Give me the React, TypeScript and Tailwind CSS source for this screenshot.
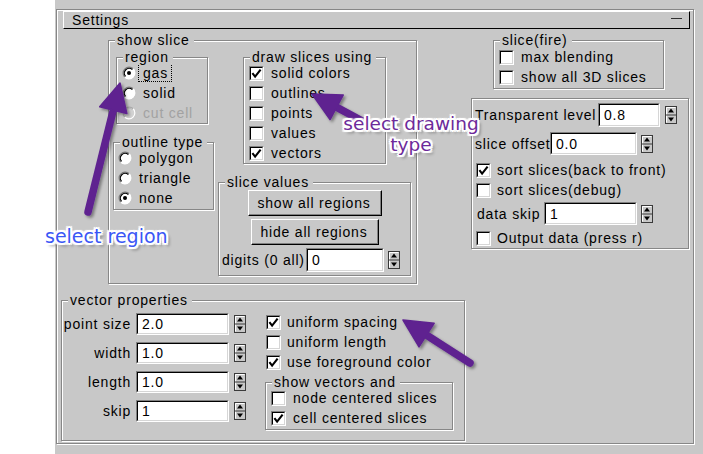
import React from "react";

const panelCls =
  "relative shrink-0 border border-[#878787] shadow-[inset_1px_1px_0_#ffffff,1px_1px_0_#ffffff]";

function Panel(props: { label?: string; className?: string; children?: React.ReactNode }) {
  return (
    <div className={panelCls + " " + (props.className ?? "")}>
      {props.label ? (
        <span className="absolute left-[6px] top-[-9px] whitespace-nowrap bg-[#c8c8c8] pl-[2px] pr-[4px] leading-[16px]">
          {props.label}
        </span>
      ) : null}
      {props.children}
    </div>
  );
}

function CheckBox({ checked }: { checked?: boolean }) {
  return (
    <span className="flex h-[15px] w-[15px] shrink-0 border border-t-[#808080] border-l-[#808080] border-b-white border-r-white">
      <span className="flex flex-1 items-center justify-center border border-t-black border-l-black border-b-[#d6d6d6] border-r-[#d6d6d6] bg-white">
        {checked ? (
          <svg width="11" height="11" viewBox="0 0 11 11">
            <path d="M1.4 5.2 L4.1 8.6 L9.6 1.6" fill="none" stroke="#000" strokeWidth="2.1" />
          </svg>
        ) : null}
      </span>
    </span>
  );
}

function CheckRow({ label, checked, wide, className = "" }: { label: string; checked?: boolean; wide?: boolean; className?: string }) {
  return (
    <div className={"flex h-[20px] shrink-0 items-center " + (wide ? "gap-[7px] " : "gap-[6px] ") + className}>
      <CheckBox checked={checked} />
      <span className="whitespace-nowrap">{label}</span>
    </div>
  );
}

function Radio({ on, disabled }: { on?: boolean; disabled?: boolean }) {
  return (
    <svg width="14" height="14" viewBox="0 0 14 14" className="shrink-0">
      <circle cx="7" cy="7" r="6" fill={disabled ? "#d2d2d2" : "#ffffff"} />
      <path d="M2.76 11.24A6 6 0 0 1 11.24 2.76" fill="none" stroke={disabled ? "#a9a9a9" : "#7a7a7a"} strokeWidth="1.2" />
      <path d="M3.61 10.39A4.8 4.8 0 0 1 10.39 3.61" fill="none" stroke={disabled ? "#bdbdbd" : "#000000"} strokeWidth="1.2" />
      <path d="M11.24 2.76A6 6 0 0 1 2.76 11.24" fill="none" stroke="#ffffff" strokeWidth="1.2" />
      {on ? <circle cx="7" cy="7" r="2" fill="#000" /> : null}
    </svg>
  );
}

function RadioRow({ label, on, focus, disabled }: { label: string; on?: boolean; focus?: boolean; disabled?: boolean }) {
  return (
    <div className="flex h-[20px] shrink-0 items-center">
      <Radio on={on} disabled={disabled} />
      <span
        className={
          "ml-[2px] flex h-[18px] items-center whitespace-nowrap border border-dotted pl-[4px] pr-[3px] " +
          (focus ? "border-black" : "border-transparent") +
          (disabled ? " text-[#a2a2a2]" : "")
        }
      >
        {label}
      </span>
    </div>
  );
}

function Spinner({ className = "" }: { className?: string }) {
  return (
    <svg width="12" height="18" viewBox="0 0 12 18" className={"shrink-0 " + className}>
      <rect x="0" y="0" width="12" height="18" fill="#c8c8c8" />
      <rect x="0.5" y="0.5" width="11" height="17" fill="none" stroke="#3a3a3a" />
      <path d="M1.5 16.5V1.5H10.5" fill="none" stroke="#ffffff" />
      <path d="M1 9H11" stroke="#3a3a3a" />
      <path d="M6 2.6L9 6.6H3Z" fill="#000" />
      <path d="M3 11.4H9L6 15.4Z" fill="#000" />
    </svg>
  );
}

function Field({ value, className = "" }: { value: string; className?: string }) {
  return (
    <div className={"flex shrink-0 border border-t-[#808080] border-l-[#808080] border-b-white border-r-white " + className}>
      <div className="flex flex-1 items-center border border-t-black border-l-black border-b-[#d6d6d6] border-r-[#d6d6d6] bg-white pl-[4px]">
        {value}
      </div>
    </div>
  );
}

function Btn({ children, className = "" }: { children: React.ReactNode; className?: string }) {
  return (
    <div className={"flex shrink-0 border border-t-white border-l-white border-b-black border-r-black " + className}>
      <div className="flex flex-1 items-center justify-center border-b border-r border-b-[#808080] border-r-[#808080] whitespace-nowrap">
        {children}
      </div>
    </div>
  );
}

function arrow(tx: number, ty: number, px: number, py: number, hl = 28, hw = 14) {
  const dx = px - tx;
  const dy = py - ty;
  const L = Math.hypot(dx, dy);
  const ux = dx / L;
  const uy = dy / L;
  const nx = -uy;
  const ny = ux;
  const bx = px - ux * hl;
  const by = py - uy * hl;
  return {
    shaft: `M${tx} ${ty} L${bx + ux * 3} ${by + uy * 3}`,
    head: `M${px} ${py} L${bx + nx * hw} ${by + ny * hw} L${bx - nx * hw} ${by - ny * hw} Z`,
  };
}

const ARROWS = [arrow(88, 212, 120, 83), arrow(366, 123, 312, 94), arrow(470, 363, 403, 320)];

const outline =
  "[text-shadow:0_0_1px_#fff,1px_0_0_#fff,-1px_0_0_#fff,0_1px_0_#fff,0_-1px_0_#fff,1px_1px_0_#fff,-1px_-1px_0_#fff,1px_-1px_0_#fff,-1px_1px_0_#fff,2px_0_0_#fff,-2px_0_0_#fff,0_2px_0_#fff,0_-2px_0_#fff,2px_2px_1px_#fff,-2px_-2px_1px_#fff,2px_-2px_1px_#fff,-2px_2px_1px_#fff,3px_3px_3px_rgba(0,0,0,0.45)]";

export default function App() {
  return (
    <div className="relative flex h-[454px] w-[703px] overflow-hidden bg-white font-['Liberation_Sans',Arial,sans-serif] text-[14px] leading-[16px] tracking-[0.8px] text-black">
      <div className="h-[454px] w-[55px] shrink-0 bg-white" />
      <div className="h-[454px] w-[648px] shrink-0 bg-[#c8c8c8] pl-[1px] pt-[9px]">
        {/* outer rollout frame */}
        <div className="flex h-[435px] w-[638px] flex-col border border-[#878787] shadow-[inset_1px_1px_0_#ffffff,1px_1px_0_#ffffff]">
          {/* title bar */}
          <div className="ml-[6px] mt-[1px] flex h-[18px] w-[627px] shrink-0 items-center justify-between border border-t-white border-l-white border-b-black border-r-black pl-[8px] pr-[7px]">
            <span>Settings</span>
            <span className="mb-[3px] h-[1px] w-[11px] bg-[#303030]" />
          </div>

          {/* row 1 */}
          <div className="mt-[11px] flex shrink-0">
            <Panel label="show slice" className="ml-[51px] h-[244px] w-[309px]">
              <div className="flex">
                {/* column 1 */}
                <div className="ml-[4px] flex w-[101px] shrink-0 flex-col">
                  <Panel label="region" className="ml-[3px] mt-[16px] h-[67px] w-[92px]">
                    <div className="flex flex-col pl-[5px] pt-[5px]">
                      <RadioRow label="gas" on focus />
                      <RadioRow label="solid" />
                      <RadioRow label="cut cell" disabled />
                    </div>
                  </Panel>
                  <Panel label="outline type" className="mt-[18px] h-[68px] w-[101px]">
                    <div className="flex flex-col pl-[4px] pt-[5px]">
                      <RadioRow label="polygon" />
                      <RadioRow label="triangle" />
                      <RadioRow label="none" on />
                    </div>
                  </Panel>
                </div>
                {/* column 2 */}
                <div className="ml-[4px] flex w-[193px] shrink-0 flex-col items-center">
                  <Panel label="draw slices using" className="mt-[16px] h-[107px] w-[143px]">
                    <div className="flex flex-col pl-[5px] pt-[5px]">
                      <CheckRow label="solid colors" checked wide />
                      <CheckRow label="outlines" wide />
                      <CheckRow label="points" wide />
                      <CheckRow label="values" wide />
                      <CheckRow label="vectors" checked wide />
                    </div>
                  </Panel>
                  <Panel label="slice values" className="mt-[18px] h-[94px] w-[193px]">
                    <div className="flex flex-col items-center pt-[7px]">
                      <Btn className="h-[26px] w-[134px]">show all regions</Btn>
                      <Btn className="mt-[3px] h-[26px] w-[128px]">hide all regions</Btn>
                      <div className="mt-[3px] flex h-[24px] items-center self-stretch pl-[3px]">
                        <span className="w-[84px] shrink-0 whitespace-nowrap">digits (0 all)</span>
                        <Field value="0" className="h-[24px] w-[78px]" />
                        <Spinner className="ml-[4px]" />
                      </div>
                    </div>
                  </Panel>
                </div>
              </div>
            </Panel>

            {/* right column */}
            <div className="ml-[54px] flex w-[218px] shrink-0 flex-col">
              <Panel label="slice(fire)" className="ml-[22px] h-[49px] w-[171px]">
                <div className="flex flex-col pl-[5px] pt-[6px]">
                  <CheckRow label="max blending" wide />
                  <CheckRow label="show all 3D slices" wide />
                </div>
              </Panel>
              <Panel className="mt-[9px] h-[151px] w-[218px]">
                <div className="flex flex-col">
                  <div className="mt-[4px] flex h-[24px] items-center pl-[3px]">
                    <span className="w-[123px] shrink-0 whitespace-nowrap">Transparent level</span>
                    <Field value="0.8" className="h-[24px] w-[62px]" />
                    <Spinner className="ml-[5px]" />
                  </div>
                  <div className="mt-[5px] flex h-[23px] items-center pl-[3px]">
                    <span className="w-[75px] shrink-0 whitespace-nowrap">slice offset</span>
                    <Field value="0.0" className="h-[23px] w-[87px]" />
                    <Spinner className="ml-[4px]" />
                  </div>
                  <CheckRow label="sort slices(back to front)" checked className="ml-[4px] mt-[5px]" />
                  <CheckRow label="sort slices(debug)" className="ml-[4px]" />
                  <div className="mt-[2px] flex h-[23px] items-center pl-[5px]">
                    <span className="w-[67px] shrink-0 whitespace-nowrap">data skip</span>
                    <Field value="1" className="h-[23px] w-[93px]" />
                    <Spinner className="ml-[4px]" />
                  </div>
                  <CheckRow label="Output data (press r)" className="ml-[4px] mt-[3px]" />
                </div>
              </Panel>
            </div>
          </div>

          {/* row 2: vector properties */}
          <Panel label="vector properties" className="ml-[4px] mt-[16px] h-[141px] w-[404px]">
            <div className="flex">
              <div className="flex w-[184px] shrink-0 flex-col pt-[12px]">
                {[
                  ["point size", "2.0"],
                  ["width", "1.0"],
                  ["length", "1.0"],
                  ["skip", "1"],
                ].map(([l, v], i) => (
                  <div key={l} className={"flex h-[22px] items-center " + (i > 0 ? "mt-[7px]" : "")}>
                    <span className="w-[69px] shrink-0 whitespace-nowrap text-right">{l}</span>
                    <Field value={v} className="ml-[5px] h-[22px] w-[93px]" />
                    <Spinner className="ml-[5px]" />
                  </div>
                ))}
              </div>
              <div className="ml-[19px] flex flex-col pt-[11px]">
                <CheckRow label="uniform spacing" checked className="ml-[1px]" />
                <CheckRow label="uniform length" className="ml-[1px]" />
                <CheckRow label="use foreground color" checked className="ml-[1px]" />
                <Panel label="show vectors and" className="mt-[10px] h-[48px] w-[188px]">
                  <div className="flex flex-col pl-[5px] pt-[5px]">
                    <CheckRow label="node centered slices" wide />
                    <CheckRow label="cell centered slices" checked wide />
                  </div>
                </Panel>
              </div>
            </div>
          </Panel>
        </div>
      </div>

      {/* annotation arrows */}
      <svg className="pointer-events-none absolute left-0 top-0" width="703" height="454" viewBox="0 0 703 454">
        <defs>
          <filter id="ash" x="-30%" y="-30%" width="160%" height="160%">
            <feDropShadow dx="2" dy="2" stdDeviation="1.6" floodColor="#000" floodOpacity="0.4" />
          </filter>
        </defs>
        {ARROWS.map((a, i) => (
          <g key={i} filter="url(#ash)">
            <path d={a.shaft} stroke="#5e2490" strokeWidth="7.5" strokeLinecap="round" fill="none" />
            <path d={a.head} fill="#5e2490" stroke="#5e2490" strokeWidth="1.5" strokeLinejoin="round" />
          </g>
        ))}
      </svg>

      <div
        className={
          "pointer-events-none absolute left-[45px] top-[225px] whitespace-nowrap font-['DejaVu_Sans',sans-serif] text-[19px] leading-[22px] tracking-normal text-[#3a56f5] " +
          outline
        }
      >
        select region
      </div>
      <div
        className={
          "pointer-events-none absolute left-[340px] top-[113px] w-[142px] text-center font-['DejaVu_Sans',sans-serif] text-[18.5px] leading-[21px] tracking-normal text-[#6d2a9a] " +
          outline
        }
      >
        select drawing
        <br />
        type
      </div>
    </div>
  );
}
